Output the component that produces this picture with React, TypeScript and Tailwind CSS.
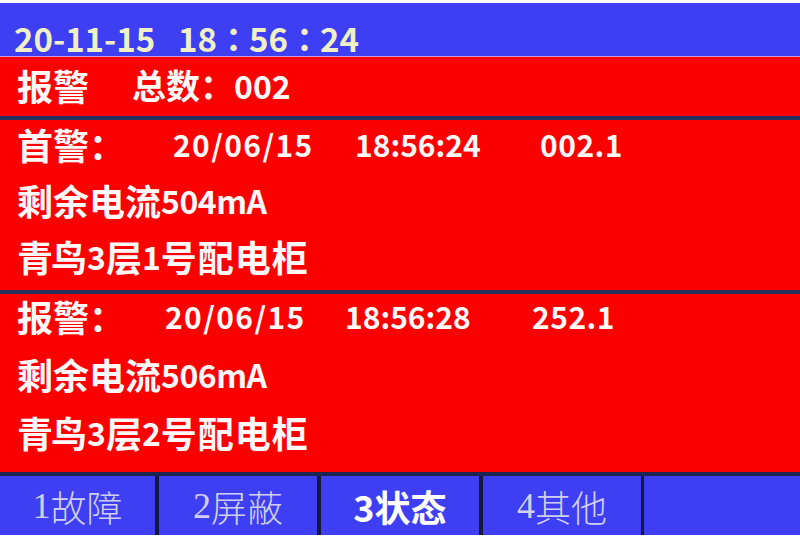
import React from 'react';

const CJK = "font-['Noto_Sans_CJK_SC','Noto_Sans',sans-serif]";

type Alarm = {
  label: string;
  date: string;
  time: string;
  value: string;
  current: string;
  place: [string, string, string, string, string];
  cols: [string, string, string];
};

const ALARMS: Alarm[] = [
  {
    label: '首警：',
    date: '20/06/15',
    time: '18:56:24',
    value: '002.1',
    current: '504mA',
    place: ['青鸟', '3', '层', '1', '号配电柜'],
    cols: ['w-[156px]', 'w-[182px]', 'w-[185px]'],
  },
  {
    label: '报警：',
    date: '20/06/15',
    time: '18:56:28',
    value: '252.1',
    current: '506mA',
    place: ['青鸟', '3', '层', '2', '号配电柜'],
    cols: ['w-[148px]', 'w-[180px]', 'w-[187px]'],
  },
];

const TABS = [
  { num: '1', name: '故障', active: false },
  { num: '2', name: '屏蔽', active: false },
  { num: '3', name: '状态', active: true },
  { num: '4', name: '其他', active: false },
];

function AlarmBlock({ a, first }: { a: Alarm; first: boolean }) {
  const row = first ? 'h-[56px]' : 'h-[58px]';
  return (
    <div className={`flex flex-col bg-[#fb0000] pl-[17px] text-[#fff8f8] font-bold ${first ? 'h-[170px]' : 'h-[178px]'}`}>
      <div className={`${row} ${first ? '-mt-[4px]' : '-mt-[7px]'} flex items-center leading-none`}>
        <span className={`${a.cols[0]} text-[36px]`}>{a.label}</span>
        <span className={`${a.cols[1]} text-[30px] tracking-[1.4px]`}>{a.date}</span>
        <span className={`${a.cols[2]} text-[30px] tracking-[0px]`}>{a.time}</span>
        <span className="text-[30px] tracking-[0.5px]">{a.value}</span>
      </div>
      <div className={`${row} flex items-center leading-none`}>
        <span className="text-[36px]">剩余电流</span>
        <span className="text-[32px] tracking-[-0.5px]">{a.current}</span>
      </div>
      <div className={`${row} flex items-center leading-none`}>
        <span className="text-[36px] tracking-[-2px]">{a.place[0]}</span>
        <span className="text-[32px] ml-[2px]">{a.place[1]}</span>
        <span className="text-[36px]">{a.place[2]}</span>
        <span className="text-[32px]">{a.place[3]}</span>
        <span className="text-[36px] tracking-[1px]">{a.place[4]}</span>
      </div>
    </div>
  );
}

export default function App() {
  return (
    <div className={`w-[800px] h-[538px] overflow-hidden bg-white pt-[3px] flex flex-col ${CJK}`}>
      {/* date / time bar */}
      <div className="h-[53px] bg-[#3e3ef2] pl-[14px] pt-[19px] flex items-start leading-none text-[33px] font-bold text-[#f0f0c6]">
        <span className="w-[164px]">20-11-15</span>
        <span>18</span>
        <span className="font-['Noto_Sans_CJK_TC',sans-serif] w-[32px] text-center">：</span>
        <span>56</span>
        <span className="font-['Noto_Sans_CJK_TC',sans-serif] w-[32px] text-center">：</span>
        <span>24</span>
      </div>
      <div className="h-px bg-[#c8a2d2]" />

      {/* summary */}
      <div className="h-[59px] bg-[#fb0000] pl-[17px] pb-[4px] flex items-center leading-none font-bold text-[#fff8f8]">
        <span className="w-[115px] text-[36px]">报警</span>
        <span className="text-[34px]">总数：</span>
        <span className="text-[32px]">002</span>
      </div>
      <div className="h-[4px] bg-[#24315a]" />

      <AlarmBlock a={ALARMS[0]} first />
      <div className="h-[4px] bg-[#24315a]" />
      <AlarmBlock a={ALARMS[1]} first={false} />
      <div className="h-[4px] bg-[#1c2550]" />

      {/* function keys */}
      <div className="flex h-[59px] bg-[#3e3ef2]">
        {TABS.map((t, i) => (
          <div
            key={t.num}
            className={`flex items-center justify-center leading-none border-[#14183c] ${i === 0 ? 'w-[155px]' : 'w-[162px] border-l-[4px]'} ${t.active ? 'text-white font-bold' : 'text-[#d0d0ee] font-light'}`}
          >
            <span className={`text-[36px] ${t.active ? '' : "font-['Liberation_Serif',serif]"}`}>{t.num}</span>
            <span className="text-[36px]">{t.name}</span>
          </div>
        ))}
        <div className="flex-1 border-l-[3px] border-[#14183c]" />
      </div>
      <div className="flex-1 bg-white" />
    </div>
  );
}
